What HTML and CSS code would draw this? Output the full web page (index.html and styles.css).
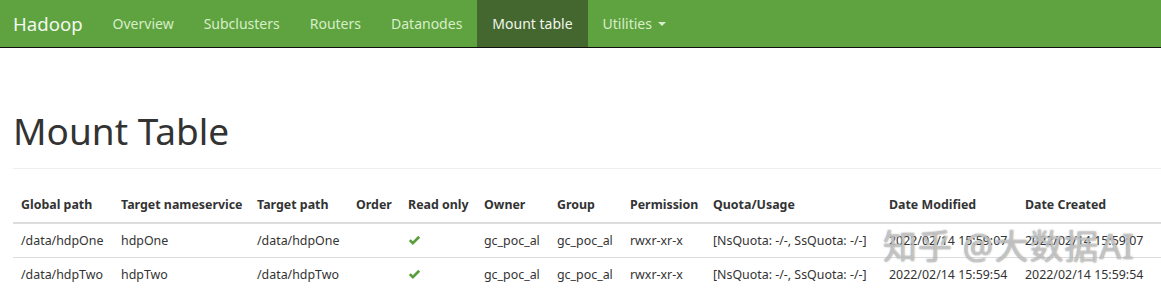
FILE: index.html
```html
<!DOCTYPE html>
<html>
<head>
<meta charset="utf-8">
<link rel="stylesheet" href="styles.css">
</head>
<body>
<nav class="navbar">
  <span class="brand">Hadoop</span>
  <ul class="nav">
    <li><a>Overview</a></li>
    <li><a>Subclusters</a></li>
    <li><a>Routers</a></li>
    <li><a>Datanodes</a></li>
    <li class="active"><a>Mount table</a></li>
    <li><a>Utilities <span class="caret"></span></a></li>
  </ul>
</nav>
<main class="page">
  <h1 class="title">Mount Table</h1>
  <hr class="rule">
  <div class="table-wrap">
    <table class="mounts">
      <thead>
        <tr>
          <th class="c1">Global path</th>
          <th class="c2">Target nameservice</th>
          <th class="c3">Target path</th>
          <th class="c4">Order</th>
          <th class="c5">Read only</th>
          <th class="c6">Owner</th>
          <th class="c7">Group</th>
          <th class="c8">Permission</th>
          <th class="c9">Quota/Usage</th>
          <th class="c10">Date Modified</th>
          <th class="c11">Date Created</th>
        </tr>
      </thead>
      <tbody>
        <tr>
          <td>/data/hdpOne</td>
          <td>hdpOne</td>
          <td>/data/hdpOne</td>
          <td></td>
          <td><svg class="ok" viewBox="0 0 14 12" width="13" height="11"><path d="M0.8 6.6 L2.9 4.5 L5.2 6.8 L11.1 0.9 L13.2 3 L5.2 11 Z" fill="#5a9e3c"/></svg></td>
          <td>gc_poc_al</td>
          <td>gc_poc_al</td>
          <td>rwxr-xr-x</td>
          <td>[NsQuota: -/-, SsQuota: -/-]</td>
          <td>2022/02/14 15:59:07</td>
          <td>2022/02/14 15:59:07</td>
        </tr>
        <tr>
          <td>/data/hdpTwo</td>
          <td>hdpTwo</td>
          <td>/data/hdpTwo</td>
          <td></td>
          <td><svg class="ok" viewBox="0 0 14 12" width="13" height="11"><path d="M0.8 6.6 L2.9 4.5 L5.2 6.8 L11.1 0.9 L13.2 3 L5.2 11 Z" fill="#5a9e3c"/></svg></td>
          <td>gc_poc_al</td>
          <td>gc_poc_al</td>
          <td>rwxr-xr-x</td>
          <td>[NsQuota: -/-, SsQuota: -/-]</td>
          <td>2022/02/14 15:59:54</td>
          <td>2022/02/14 15:59:54</td>
        </tr>
      </tbody>
    </table>
    <div class="watermark">知乎 @大数据AI</div>
  </div>
</main>
</body>
</html>
```
FILE: styles.css
```css
html, body {
  margin: 0;
  padding: 0;
  background: #fff;
}
body {
  font-family: "Noto Sans", "Noto Sans CJK SC", sans-serif;
  color: #333;
  font-size: 12.4px;
}
.navbar {
  display: flex;
  align-items: stretch;
  height: 47px;
  background: #5fa341;
  border-bottom: 1px solid #111;
}
.brand {
  display: flex;
  align-items: center;
  padding: 0 15px 0 13px;
  font-size: 18.6px;
  color: #f2f8ee;
}
.nav {
  display: flex;
  margin: 0;
  padding: 0;
  list-style: none;
}
.nav li {
  display: flex;
}
.nav a {
  display: flex;
  align-items: center;
  padding: 0 15px;
  font-size: 14px;
  color: #d7eec7;
}
.nav li.active a {
  background: #44672f;
  color: #f0f6ec;
}
.caret {
  display: inline-block;
  width: 0;
  height: 0;
  margin-left: 6px;
  border-top: 4px solid #d7eec7;
  border-left: 4px solid transparent;
  border-right: 4px solid transparent;
}
.page {
  padding: 0 0 0 13px;
}
.title {
  margin: 0;
  padding-top: 59px;
  font-size: 37px;
  font-weight: 400;
  line-height: 48px;
  color: #333;
}
.rule {
  margin: 13px 0 0 0;
  border: 0;
  border-top: 1px solid #eee;
}
.table-wrap {
  position: relative;
  margin-top: 19px;
}
.mounts {
  width: 100%;
  border-collapse: collapse;
  table-layout: fixed;
}
.mounts th,
.mounts td {
  box-sizing: border-box;
}
.mounts th {
  text-align: left;
  font-weight: 700;
  padding: 8px;
  line-height: 18px;
  border-bottom: 2px solid #ddd;
  white-space: nowrap;
}
.mounts td {
  padding: 8px;
  line-height: 17px;
  white-space: nowrap;
  border-bottom: 1px solid #ddd;
}
.mounts tbody tr:last-child td {
  border-bottom: 0;
}
.ok {
  display: block;
  margin-top: 0;
}
.c1 { width: 100px; }
.c2 { width: 136px; }
.c3 { width: 99px; }
.c4 { width: 52px; }
.c5 { width: 76px; }
.c6 { width: 73px; }
.c7 { width: 73px; }
.c8 { width: 83px; }
.c9 { width: 176px; }
.c10 { width: 136px; }
.watermark {
  position: absolute;
  left: 870px;
  top: 38px;
  font-size: 34px;
  line-height: 40px;
  letter-spacing: 1px;
  color: rgba(255, 255, 255, 0.55);
  text-shadow: 0 0 1px rgba(90, 90, 90, 0.7), 0 0 2px rgba(120, 120, 120, 0.5);
  white-space: nowrap;
  pointer-events: none;
}
```
